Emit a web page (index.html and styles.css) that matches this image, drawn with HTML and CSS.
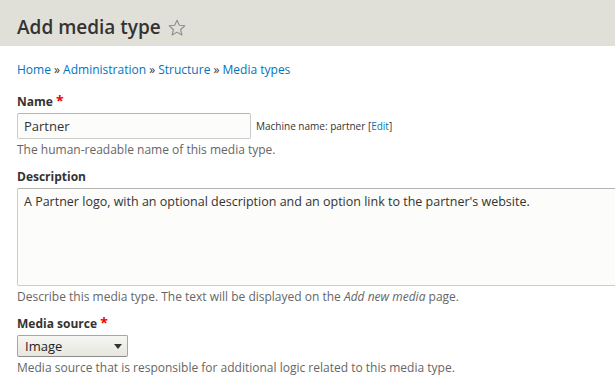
FILE: index.html
```html
<!DOCTYPE html>
<html lang="en">
  <head>
    <meta charset="UTF-8" />
    <title>Add media type</title>
    <link rel="stylesheet" href="styles.css">
  </head>
  <body>
    <div class="page-header">
      <h1 class="page-title">Add media type</h1>
      <svg class="shortcut-star" width="18" height="18" viewBox="0 0 18 18">
        <polygon points="9,1.2 11.3,6.3 16.8,6.8 12.6,10.5 13.9,16 9,13.1 4.1,16 5.4,10.5 1.2,6.8 6.7,6.3"
          fill="none" stroke="#8e8e8a" stroke-width="1.1" stroke-linejoin="round" />
      </svg>
    </div>

    <div class="content">
      <nav class="breadcrumb">
        <a href="#">Home</a> &raquo; <a href="#">Administration</a> &raquo;
        <a href="#">Structure</a> &raquo; <a href="#">Media types</a>
      </nav>

      <form class="media-type-form">
        <!-- Name -->
        <div class="form-item">
          <label for="name">Name <span class="required">*</span></label>
          <div class="name-row">
            <input type="text" id="name" class="form-text" value="Partner" />
            <span class="machine-name">Machine name: partner [<a href="#">Edit</a>]</span>
          </div>
          <div class="description">The human-readable name of this media type.</div>
        </div>

        <!-- Description -->
        <div class="form-item">
          <label for="desc">Description</label>
          <textarea id="desc" class="form-textarea">A Partner logo, with an optional description and an option link to the partner's website.</textarea>
          <div class="description">Describe this media type. The text will be displayed on the <em>Add new media</em> page.</div>
        </div>

        <!-- Media source -->
        <div class="form-item">
          <label for="source">Media source <span class="required">*</span></label>
          <div class="form-select">
            <span>Image</span>
            <svg width="8" height="5" viewBox="0 0 8 5"><polygon points="0,0 8,0 4,5" fill="#333" /></svg>
          </div>
          <div class="description">Media source that is responsible for additional logic related to this media type.</div>
        </div>
      </form>
    </div>
  </body>
</html>
```

FILE: styles.css
```css
html {
  overflow: hidden;
}

body {
  margin: 0;
  font-family: "Open Sans", "DejaVu Sans", sans-serif;
  font-size: 12px;
  color: #333;
  background: #fff;
}

a {
  color: #0074bd;
  text-decoration: none;
}

.page-header {
  display: flex;
  align-items: center;
  background: #e0e0d8;
  height: 46px;
  padding: 8px 17px 0;
  box-sizing: border-box;
}

.page-title {
  margin: 0;
  font-size: 19px;
  font-weight: 600;
  line-height: 28px;
  color: #333;
}

.shortcut-star {
  margin-left: 7px;
  margin-top: 1px;
}

.content {
  padding: 0 17px;
}

.breadcrumb {
  margin-top: 15px;
  line-height: 18px;
  font-size: 12px;
  color: #333;
}

.media-type-form {
  margin-top: 15px;
}

.form-item {
  margin-bottom: 11px;
}

.form-item label {
  display: block;
  font-weight: bold;
  line-height: 16px;
  margin-bottom: 3px;
  color: #333;
}

.required {
  color: #e00;
  font-size: 14px;
  line-height: 10px;
}

.name-row {
  display: flex;
  align-items: center;
  gap: 5px;
}

.form-text {
  width: 234px;
  height: 26px;
  box-sizing: border-box;
  padding: 0 6px;
  font-family: inherit;
  font-size: 13px;
  color: #333;
  background: #fcfcfa;
  border: 1px solid #ccc;
  border-top-color: #b4b4b4;
  border-radius: 2px;
}

.machine-name {
  font-size: 10px;
  color: #333;
}

.description {
  margin-top: 3px;
  line-height: 16px;
  color: #666;
}

.form-textarea {
  display: block;
  width: 620px;
  height: 98px;
  box-sizing: border-box;
  padding: 4px 6px 3px;
  font-family: inherit;
  font-size: 12.5px;
  line-height: 17px;
  color: #333;
  background: #fcfcfa;
  border: 1px solid #ccc;
  border-top-color: #b4b4b4;
  border-radius: 2px;
  resize: none;
}

.form-select {
  display: flex;
  align-items: center;
  justify-content: space-between;
  width: 111px;
  height: 22px;
  box-sizing: border-box;
  padding: 0 5px 0 7px;
  font-size: 13px;
  color: #222;
  background: linear-gradient(#f6f6f3, #e7e7df);
  border: 1px solid #a6a6a6;
  border-bottom-color: #8c8c8c;
  border-radius: 2px;
}
```
